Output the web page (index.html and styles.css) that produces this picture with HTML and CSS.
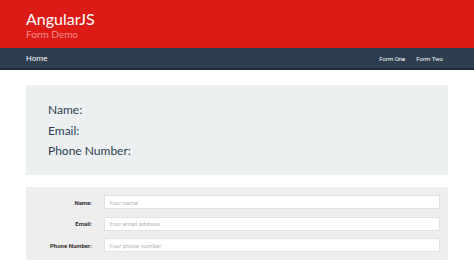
FILE: index.html
```html
<!DOCTYPE html>
<html lang="en">
<head>
    <meta charset="UTF-8">
    <title>AngularJS Form Demo</title>
    <link rel="stylesheet" href="styles.css">
</head>
<body>
    <header class="banner">
        <h1>AngularJS</h1>
        <p>Form Demo</p>
    </header>

    <nav class="navbar">
        <a href="#" class="brand">Home</a>
        <div class="links">
            <a href="#">Form One</a>
            <a href="#">Form Two</a>
        </div>
    </nav>

    <main class="content">
        <div class="well">
            <p>Name:</p>
            <p>Email:</p>
            <p>Phone Number:</p>
        </div>

        <form class="form-panel">
            <div class="row">
                <label for="name">Name:</label>
                <input type="text" id="name" placeholder="Your name">
            </div>
            <div class="row">
                <label for="email">Email:</label>
                <input type="text" id="email" placeholder="Your email address">
            </div>
            <div class="row">
                <label for="phone">Phone Number:</label>
                <input type="text" id="phone" placeholder="Your phone number">
            </div>
        </form>
    </main>
</body>
</html>
```

FILE: styles.css
```css
body {
    margin: 0;
    font-family: Lato, "Open Sans", sans-serif;
    background: #fff;
    color: #2c3e50;
}
.banner {
    background: #dd1b16;
    height: 48px;
    padding: 10px 26px 0;
    box-sizing: border-box;
}
.banner h1 {
    margin: 0;
    font-size: 16px;
    font-weight: 400;
    line-height: 18px;
    color: #fff;
}
.banner p {
    margin: 0;
    font-size: 10px;
    line-height: 12px;
    color: #f48a86;
}
.navbar {
    display: flex;
    align-items: center;
    justify-content: space-between;
    height: 20px;
    padding: 0 31px 0 26px;
    background: #2c3e50;
    border-bottom: 2px solid #1e2b37;
    font-family: Roboto, sans-serif;
}
.navbar a {
    color: #fff;
    text-decoration: none;
}
.navbar .brand {
    font-size: 8px;
}
.navbar .links {
    display: flex;
    gap: 11px;
    font-size: 6px;
}
.content {
    padding: 15px 26px 0;
}
.well {
    background: #ecf0f1;
    height: 90px;
    box-sizing: border-box;
    padding: 15px 22px;
}
.well p {
    margin: 0;
    font-size: 12px;
    line-height: 20.5px;
    color: #2c3e50;
}
.form-panel {
    margin-top: 12px;
    background: #eeeeee;
    padding: 8px 8px 8px 0;
    display: flex;
    flex-direction: column;
    gap: 7.5px;
}
.row {
    display: flex;
    align-items: center;
}
.row label {
    width: 66px;
    text-align: right;
    padding-right: 12px;
    font-family: Roboto, sans-serif;
    font-size: 6px;
    font-weight: 700;
    color: #333;
}
.row input {
    flex: 1;
    height: 14px;
    box-sizing: border-box;
    border: 1px solid #e2e2e2;
    background: #fff;
    padding: 0 4px;
    font-family: Roboto, sans-serif;
    font-size: 6px;
    outline: none;
}
.row input::placeholder {
    color: #b5b5b5;
}
```
